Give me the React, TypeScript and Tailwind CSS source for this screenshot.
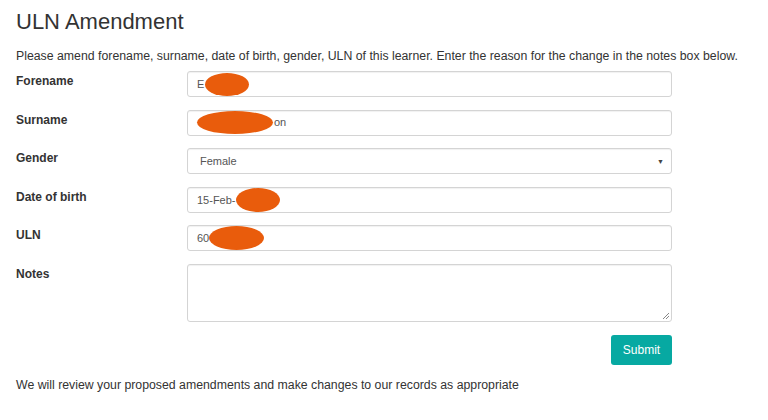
import React from "react"

const font = { fontFamily: '"Liberation Sans", Arial, sans-serif' }

const Blob = ({ w, className = "" }: { w: string; className?: string }) => (
  <span className={`inline-block h-[23px] rounded-[50%] bg-[#e95c0c] align-middle ${w} ${className}`} />
)

const Field = ({ label, children }: { label: string; children: React.ReactNode }) => (
  <div className="flex mb-[12.6px]">
    <label className="w-[171px] pt-[2px] text-[12px] font-bold text-[#333] leading-[16px]">{label}</label>
    {children}
  </div>
)

const inputCls =
  "w-[485px] h-[26px] flex items-center rounded-[3px] border border-[#d4d4d4] bg-white px-[9px] text-[11px] text-[#555] shadow-[inset_0_1px_1px_rgba(0,0,0,0.06)]"

export default function App() {
  return (
    <div className="w-[768px] h-[420px] bg-white px-4 pt-[9px] text-[#333]" style={font}>
      <h1 className="text-[22px] leading-[26px] text-[#333] font-normal">ULN Amendment</h1>
      <p className="mt-[13px] text-[12.3px] leading-[16px]">
        Please amend forename, surname, date of birth, gender, ULN of this learner. Enter the reason for the change in the notes box below.
      </p>

      <div className="mt-[7px]">
        <Field label="Forename">
          <div className={inputCls}>
            <span>E</span>
            <Blob w="w-[44px]" className="ml-[1px]" />
          </div>
        </Field>
        <Field label="Surname">
          <div className={inputCls}>
            <Blob w="w-[76px]" />
            <span className="ml-[1px]">on</span>
          </div>
        </Field>
        <Field label="Gender">
          <div className={`${inputCls} relative pl-[12px]`}>
            <span>Female</span>
            <span className="absolute right-[7px] top-[8px] text-[7px] text-[#444]">▼</span>
          </div>
        </Field>
        <Field label="Date of birth">
          <div className={inputCls}>
            <span>15-Feb-</span>
            <Blob w="w-[44px]" className="h-[24px]" />
          </div>
        </Field>
        <Field label="ULN">
          <div className={inputCls}>
            <span>60</span>
            <Blob w="w-[55px]" className="h-[24px]" />
          </div>
        </Field>
        <Field label="Notes">
          <div className="relative w-[485px] h-[58px] rounded-[3px] border border-[#d4d4d4] bg-white shadow-[inset_0_1px_1px_rgba(0,0,0,0.06)]">
            <svg className="absolute right-[1px] bottom-[1px]" width="8" height="8" viewBox="0 0 8 8">
              <path d="M7 1 L1 7 M7 4 L4 7" stroke="#888" strokeWidth="1" />
            </svg>
          </div>
        </Field>
      </div>

      <div className="flex justify-end w-[656px]">
        <button className="w-[61px] h-[30px] rounded-[3px] bg-[#07a9a2] text-white text-[12px]">Submit</button>
      </div>

      <p className="mt-[12px] text-[12.3px] leading-[16px]">
        We will review your proposed amendments and make changes to our records as appropriate
      </p>
    </div>
  )
}
